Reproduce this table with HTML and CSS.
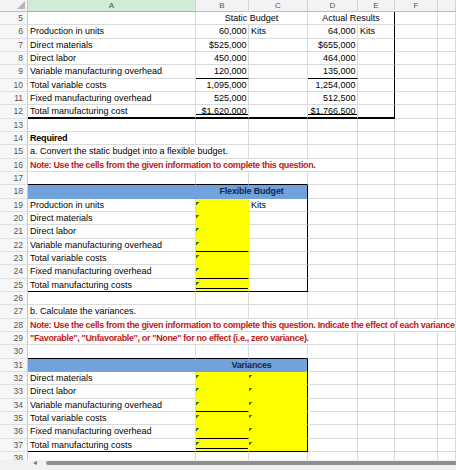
FILE: index.html
```html
<!DOCTYPE html>
<html>
<head>
<meta charset="utf-8">
<link rel="stylesheet" href="styles.css">
</head>
<body>
<div class="sheet">
  <div class="row hrow">
    <div class="corner"><svg width="8" height="8" viewBox="0 0 8 8"><polygon points="8,0 8,8 0,8" fill="#b7b7b7"/></svg></div>
    <div class="hd sel">A</div><div class="hd">B</div><div class="hd">C</div><div class="hd">D</div><div class="hd">E</div><div class="hd">F</div><div class="hd"></div>
  </div>

  <div class="row"><div class="rn">5</div><div class="c"></div><div class="c s2 ctr">Static Budget</div><div class="c s2 ctr br">Actual Results</div><div class="c"></div><div class="c"></div></div>
  <div class="row"><div class="rn">6</div><div class="c">Production in units</div><div class="c n">60,000</div><div class="c">Kits</div><div class="c n">64,000</div><div class="c br">Kits</div><div class="c"></div><div class="c"></div></div>
  <div class="row"><div class="rn">7</div><div class="c">Direct materials</div><div class="c n">$525,000</div><div class="c"></div><div class="c n">$655,000</div><div class="c br"></div><div class="c"></div><div class="c"></div></div>
  <div class="row"><div class="rn">8</div><div class="c">Direct labor</div><div class="c n">450,000</div><div class="c"></div><div class="c n">464,000</div><div class="c br"></div><div class="c"></div><div class="c"></div></div>
  <div class="row"><div class="rn">9</div><div class="c">Variable manufacturing overhead</div><div class="c n bb">120,000</div><div class="c"></div><div class="c n bb">135,000</div><div class="c br"></div><div class="c"></div><div class="c"></div></div>
  <div class="row"><div class="rn">10</div><div class="c">Total variable costs</div><div class="c n">1,095,000</div><div class="c"></div><div class="c n">1,254,000</div><div class="c br"></div><div class="c"></div><div class="c"></div></div>
  <div class="row"><div class="rn">11</div><div class="c">Fixed manufacturing overhead</div><div class="c n">525,000</div><div class="c"></div><div class="c n">512,500</div><div class="c br"></div><div class="c"></div><div class="c"></div></div>
  <div class="row"><div class="rn">12</div><div class="c bb2">Total manufacturing cost</div><div class="c n bb2 dbl">$1,620,000</div><div class="c bb2"></div><div class="c n bb2 dbl">$1,766,500</div><div class="c bb2 br"></div><div class="c"></div><div class="c"></div></div>
  <div class="row"><div class="rn">13</div><div class="c"></div><div class="c"></div><div class="c"></div><div class="c"></div><div class="c"></div><div class="c"></div><div class="c"></div></div>
  <div class="row"><div class="rn">14</div><div class="c b">Required</div><div class="c"></div><div class="c"></div><div class="c"></div><div class="c"></div><div class="c"></div><div class="c"></div></div>
  <div class="row"><div class="rn">15</div><div class="c s2">a. Convert the static budget into a flexible budget.</div><div class="c"></div><div class="c"></div><div class="c"></div><div class="c"></div><div class="c"></div></div>
  <div class="row"><div class="rn">16</div><div class="c s4 red">Note: Use the cells from the given information to complete this question.</div><div class="c"></div><div class="c"></div><div class="c"></div></div>
  <div class="row"><div class="rn">17</div><div class="c bb"></div><div class="c bb"></div><div class="c bb"></div><div class="c"></div><div class="c"></div><div class="c"></div><div class="c"></div></div>

  <div class="row"><div class="rn">18</div><div class="c blue"></div><div class="c s2 blue ctr hdr br">Flexible Budget</div><div class="c"></div><div class="c"></div><div class="c"></div><div class="c"></div></div>
  <div class="row"><div class="rn">19</div><div class="c">Production in units</div><div class="c y tri"></div><div class="c br">Kits</div><div class="c"></div><div class="c"></div><div class="c"></div><div class="c"></div></div>
  <div class="row"><div class="rn">20</div><div class="c">Direct materials</div><div class="c y tri"></div><div class="c br"></div><div class="c"></div><div class="c"></div><div class="c"></div><div class="c"></div></div>
  <div class="row"><div class="rn">21</div><div class="c">Direct labor</div><div class="c y tri"></div><div class="c br"></div><div class="c"></div><div class="c"></div><div class="c"></div><div class="c"></div></div>
  <div class="row"><div class="rn">22</div><div class="c">Variable manufacturing overhead</div><div class="c y tri bb"></div><div class="c br"></div><div class="c"></div><div class="c"></div><div class="c"></div><div class="c"></div></div>
  <div class="row"><div class="rn">23</div><div class="c">Total variable costs</div><div class="c y tri"></div><div class="c br"></div><div class="c"></div><div class="c"></div><div class="c"></div><div class="c"></div></div>
  <div class="row"><div class="rn">24</div><div class="c">Fixed manufacturing overhead</div><div class="c y tri bb"></div><div class="c br"></div><div class="c"></div><div class="c"></div><div class="c"></div><div class="c"></div></div>
  <div class="row"><div class="rn">25</div><div class="c bb">Total manufacturing costs</div><div class="c y tri dbl bb"></div><div class="c bb br"></div><div class="c"></div><div class="c"></div><div class="c"></div><div class="c"></div></div>
  <div class="row"><div class="rn">26</div><div class="c"></div><div class="c"></div><div class="c"></div><div class="c"></div><div class="c"></div><div class="c"></div><div class="c"></div></div>
  <div class="row"><div class="rn">27</div><div class="c">b. Calculate the variances.</div><div class="c"></div><div class="c"></div><div class="c"></div><div class="c"></div><div class="c"></div><div class="c"></div></div>
  <div class="row"><div class="rn">28</div><div class="c sall red">Note: Use the cells from the given information to complete this question. Indicate the effect of each variance as</div></div>
  <div class="row"><div class="rn">29</div><div class="c s4 red">"Favorable", "Unfavorable", or "None" for no effect (i.e., zero variance).</div><div class="c"></div><div class="c"></div><div class="c"></div></div>
  <div class="row"><div class="rn">30</div><div class="c bb"></div><div class="c bb"></div><div class="c bb"></div><div class="c"></div><div class="c"></div><div class="c"></div><div class="c"></div></div>

  <div class="row"><div class="rn">31</div><div class="c blue"></div><div class="c s2 blue ctr hdr br">Variances</div><div class="c"></div><div class="c"></div><div class="c"></div><div class="c"></div></div>
  <div class="row"><div class="rn">32</div><div class="c">Direct materials</div><div class="c y tri"></div><div class="c y tri br"></div><div class="c"></div><div class="c"></div><div class="c"></div><div class="c"></div></div>
  <div class="row"><div class="rn">33</div><div class="c">Direct labor</div><div class="c y tri"></div><div class="c y tri br"></div><div class="c"></div><div class="c"></div><div class="c"></div><div class="c"></div></div>
  <div class="row"><div class="rn">34</div><div class="c">Variable manufacturing overhead</div><div class="c y tri bb"></div><div class="c y tri br"></div><div class="c"></div><div class="c"></div><div class="c"></div><div class="c"></div></div>
  <div class="row"><div class="rn">35</div><div class="c">Total variable costs</div><div class="c y tri"></div><div class="c y tri br"></div><div class="c"></div><div class="c"></div><div class="c"></div><div class="c"></div></div>
  <div class="row"><div class="rn">36</div><div class="c">Fixed manufacturing overhead</div><div class="c y tri bb"></div><div class="c y tri br"></div><div class="c"></div><div class="c"></div><div class="c"></div><div class="c"></div></div>
  <div class="row"><div class="rn">37</div><div class="c bb">Total manufacturing costs</div><div class="c y tri dbl bb"></div><div class="c y tri bb br"></div><div class="c"></div><div class="c"></div><div class="c"></div><div class="c"></div></div>
  <div class="row last"><div class="rn">38</div><div class="c"></div><div class="c"></div><div class="c"></div><div class="c"></div><div class="c"></div><div class="c"></div><div class="c"></div></div>

  <div class="hscroll"><span class="arrow"></span><span class="thumb"></span></div>
</div>
</body>
</html>
```

FILE: styles.css
```css
* { box-sizing: border-box; margin: 0; padding: 0; }
html, body { width: 456px; height: 470px; overflow: hidden; background: #fff; }
body { font-family: "Liberation Sans", Arial, sans-serif; font-size: 9px; color: #000; }

.sheet { display: flex; flex-direction: column; height: 470px; }

.row {
  display: grid;
  grid-template-columns: 28px 168px 53px 59px 50px 37px 43px 1fr;
  height: 13.333px;
  flex: none;
}
.row.last { height: 8px; overflow: hidden; }

.hrow { height: 12px; }
.corner {
  background: #f3f3f3;
  border-right: 1px solid #c9c9c9;
  border-bottom: 1px solid #bdbdbd;
  display: flex;
  align-items: flex-end;
  justify-content: flex-end;
  padding: 0 2px 2px 0;
}
.hd {
  background: #f3f3f3;
  color: #555;
  font-size: 8px;
  line-height: 11px;
  text-align: center;
  border-right: 1px solid #d4d4d4;
  border-bottom: 1px solid #bdbdbd;
}
.hd.sel { background: #d2ead8; color: #2a5f3c; border-bottom-color: #8dbd9c; }

.rn {
  background: #f7f7f7;
  color: #555;
  font-size: 8.5px;
  line-height: 12.333px;
  text-align: right;
  padding-right: 4px;
  border-right: 1px solid #c9c9c9;
  border-bottom: 1px solid #e0e0e0;
}

.c {
  border-right: 1px solid #dadada;
  border-bottom: 1px solid #dadada;
  white-space: nowrap;
  overflow: hidden;
  padding: 0 2px;
  line-height: 12.333px;
}
.n { text-align: right; padding-right: 1.5px; }
.ctr { text-align: center; }
.b { font-weight: bold; letter-spacing: -0.2px; }
.red { color: #c01a1a; font-weight: bold; letter-spacing: -0.35px; }
.s2 { grid-column: span 2; }
.s4 { grid-column: span 4; }
.sall { grid-column: 2 / -1; }

.blue { background: #72a2dc; border-right-color: #72a2dc; border-bottom-color: #72a2dc; }
.hdr { font-weight: bold; color: #15264a; letter-spacing: -0.2px; }
.y { background-color: #ffff00; border-right-color: #ffff00; border-bottom-color: #ffff00; }
.tri {
  background-image: linear-gradient(135deg, #1d7a3c 50%, transparent 50%);
  background-size: 4px 4px;
  background-position: 0 3px;
  background-repeat: no-repeat;
}
.dbl {
  background-image: linear-gradient(#000, #000);
  background-size: 100% 1px;
  background-position: 0 calc(100% - 2px);
  background-repeat: no-repeat;
}
.tri.dbl {
  background-image: linear-gradient(135deg, #1d7a3c 50%, transparent 50%), linear-gradient(#000, #000);
  background-size: 4px 4px, 100% 1px;
  background-position: 0 3px, 0 calc(100% - 2px);
  background-repeat: no-repeat;
}

.bb { border-bottom: 1px solid #000; }
.bb2 { border-bottom: 2px solid #000; }
.br { border-right-color: #000; }

.hscroll {
  flex: none;
  height: 10px;
  background: #f1f1f1;
  display: flex;
  align-items: flex-start;
  padding-left: 33px;
  gap: 9px;
}
.arrow {
  margin-top: 1px;
  width: 0;
  height: 0;
  border-right: 4px solid #7a7a7a;
  border-top: 2.5px solid transparent;
  border-bottom: 2.5px solid transparent;
}
.thumb {
  margin-top: 1px;
  flex: 1;
  height: 4.5px;
  background: #8f8f8f;
  border-radius: 2px 0 0 2px;
}
```
